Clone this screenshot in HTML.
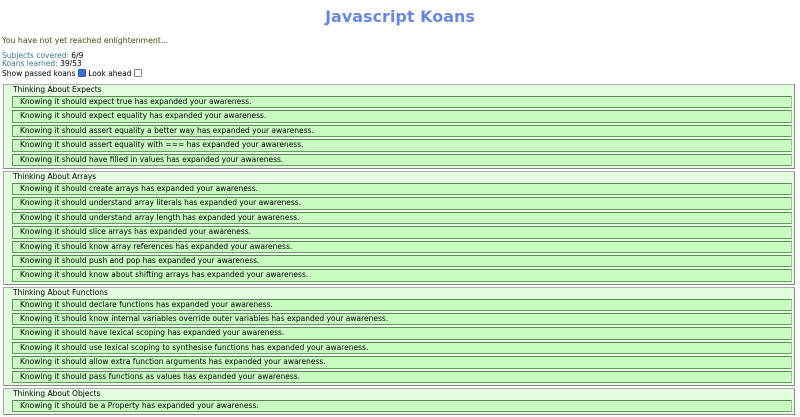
<!DOCTYPE html>
<html><head><style>
body{margin:0;background:#fff;font-family:"DejaVu Sans","Liberation Sans",sans-serif;font-size:7.5px;color:#000;width:800px;height:401px;overflow:hidden}
h1{margin:0;position:absolute;top:7px;left:0;width:800px;text-align:center;color:#6b87e6;font-size:16px;font-weight:bold;font-family:"DejaVu Sans",sans-serif}
.info{position:absolute;left:2px;top:37px;line-height:8.5px}
.msg{color:#4a4a10;margin-bottom:6px;font-size:7.8px}
.lbl{color:#3a7a8a}
.cb{display:inline-block;width:6px;height:6px;vertical-align:-1px;border:1px solid #888;border-radius:1px}
.cb.on{background:#3a6fd8;border-color:#2a5ac0}
#list{position:absolute;left:3px;top:84px;width:792px}
.sec{background:#e4fde0;border:1px solid #aaa;border-right-color:#888;border-bottom-color:#888;padding:0 2px 2px 8px;margin-bottom:2px}
.sec .t{height:9px;line-height:10px;padding-left:1px}
.it{background:#c8fcc0;border:1px solid #6a9a64;border-top-color:#5a8a55;border-right-color:#a0c89a;height:10.4px;line-height:10.4px;margin-top:2px;padding-left:7px;white-space:nowrap}
</style></head><body>
<h1>Javascript Koans</h1>
<div class="info">
<div class="msg">You have not yet reached enlightenment...</div>
<div><span class="lbl">Subjects covered:</span> 6/9</div>
<div><span class="lbl">Koans learned:</span> 39/53</div>
<div>Show passed koans <span class="cb on"></span> Look ahead <span class="cb"></span></div>
</div>
<div id="list">
<div class="sec"><div class="t">Thinking About Expects</div>
<div class="it">Knowing it should expect true has expanded your awareness.</div>
<div class="it">Knowing it should expect equality has expanded your awareness.</div>
<div class="it">Knowing it should assert equality a better way has expanded your awareness.</div>
<div class="it">Knowing it should assert equality with === has expanded your awareness.</div>
<div class="it">Knowing it should have filled in values has expanded your awareness.</div>
</div>
<div class="sec"><div class="t">Thinking About Arrays</div>
<div class="it">Knowing it should create arrays has expanded your awareness.</div>
<div class="it">Knowing it should understand array literals has expanded your awareness.</div>
<div class="it">Knowing it should understand array length has expanded your awareness.</div>
<div class="it">Knowing it should slice arrays has expanded your awareness.</div>
<div class="it">Knowing it should know array references has expanded your awareness.</div>
<div class="it">Knowing it should push and pop has expanded your awareness.</div>
<div class="it">Knowing it should know about shifting arrays has expanded your awareness.</div>
</div>
<div class="sec"><div class="t">Thinking About Functions</div>
<div class="it">Knowing it should declare functions has expanded your awareness.</div>
<div class="it">Knowing it should know internal variables override outer variables has expanded your awareness.</div>
<div class="it">Knowing it should have lexical scoping has expanded your awareness.</div>
<div class="it">Knowing it should use lexical scoping to synthesise functions has expanded your awareness.</div>
<div class="it">Knowing it should allow extra function arguments has expanded your awareness.</div>
<div class="it">Knowing it should pass functions as values has expanded your awareness.</div>
</div>
<div class="sec"><div class="t">Thinking About Objects</div>
<div class="it">Knowing it should be a Property has expanded your awareness.</div>
</div>
</div>
</body></html>
